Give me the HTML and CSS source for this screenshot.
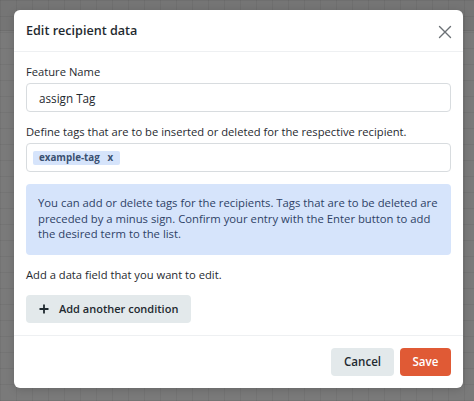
FILE: index.html
```html
<!DOCTYPE html>
<html lang="en">
<head>
  <meta charset="UTF-8">
  <meta name="viewport" content="width=device-width, initial-scale=1.0">
  <title>Edit recipient data</title>
  <link rel="stylesheet" href="styles.css">
</head>
<body>
  <div class="backdrop">
    <div class="page-top"></div>
  </div>

  <div class="modal">
    <div class="modal-header">
      <h2>Edit recipient data</h2>
      <button class="close-btn" aria-label="Close">
        <svg width="14" height="14" viewBox="0 0 14 14">
          <path d="M1.5 1.5 L12.5 12.5 M12.5 1.5 L1.5 12.5" stroke="#6b7075" stroke-width="1.4" stroke-linecap="round"/>
        </svg>
      </button>
    </div>

    <div class="modal-body">
      <label class="field-label">Feature Name</label>
      <div class="text-input">assign Tag</div>

      <label class="field-label">Define tags that are to be inserted or deleted for the respective recipient.</label>
      <div class="tag-input">
        <span class="tag">example-tag <span class="tag-x">x</span></span>
      </div>

      <div class="info-box">
        You can add or delete tags for the recipients. Tags that are to be deleted are<br>
        preceded by a minus sign. Confirm your entry with the Enter button to add<br>
        the desired term to the list.
      </div>

      <p class="field-label hint">Add a data field that you want to edit.</p>

      <button class="add-btn">
        <svg width="10" height="10" viewBox="0 0 10 10">
          <path d="M5 0.5 V9.5 M0.5 5 H9.5" stroke="#1f2a30" stroke-width="1.8"/>
        </svg>
        Add another condition
      </button>
    </div>

    <div class="modal-footer">
      <button class="btn btn-cancel">Cancel</button>
      <button class="btn btn-save">Save</button>
    </div>
  </div>
</body>
</html>
```

FILE: styles.css
```css
body {
    margin: 0;
    padding: 10px 11px 0 14px;
    font-family: "Open Sans", Arial, sans-serif;
    color: #1f2a30;
    background-color: #7a7a7a;
    background-image:
        repeating-linear-gradient(0deg, rgba(0, 0, 0, 0.05) 0 1px, transparent 1px 16px),
        repeating-linear-gradient(90deg, rgba(0, 0, 0, 0.05) 0 1px, transparent 1px 16px);
    height: 401px;
    box-sizing: border-box;
    overflow: hidden;
}

.backdrop {
    position: absolute;
    top: 0;
    left: 0;
    right: 0;
}

.page-top {
    height: 30px;
    background: rgba(0, 0, 0, 0.04);
    border-bottom: 1px solid rgba(0, 0, 0, 0.06);
}

.modal {
    position: relative;
    background: #fff;
    border-radius: 6px;
    width: 449px;
    box-shadow: 0 2px 8px rgba(0, 0, 0, 0.15);
}

.modal-header {
    display: flex;
    align-items: center;
    justify-content: space-between;
    height: 41px;
    padding: 0 10px 0 12px;
    border-bottom: 1px solid #eef0f2;
}

.modal-header h2 {
    margin: 0;
    font-size: 12.6px;
    font-weight: 600;
    color: #1f2a30;
}

.close-btn {
    background: none;
    border: none;
    padding: 0;
    width: 16px;
    height: 16px;
    display: flex;
    align-items: center;
    justify-content: center;
    margin-top: 2px;
}

.modal-body {
    padding: 12px 12px 12px 12px;
    border-bottom: 1px solid #eef0f2;
}

.field-label {
    display: block;
    margin: 0 0 3px 0;
    font-size: 11.2px;
    font-weight: 450;
    line-height: 16px;
    color: #1f2a30;
}

.text-input,
.tag-input {
    height: 27px;
    border: 1px solid #d8dcdf;
    border-radius: 4px;
    margin-bottom: 12px;
    display: flex;
    align-items: center;
}

.text-input {
    padding-left: 12px;
    font-size: 11.7px;
    font-weight: 450;
}

.tag-input {
    padding-left: 6px;
}

.tag {
    background: #d6e4fb;
    color: #3a5070;
    font-size: 9.8px;
    font-weight: 700;
    padding: 0 7px 0 6px;
    height: 14px;
    line-height: 14px;
    border-radius: 2px;
}

.tag-x {
    margin-left: 5px;
}

.info-box {
    background: #d6e4fb;
    border-radius: 4px;
    padding: 11px 6px 13px 12px;
    font-size: 11.3px;
    font-weight: 450;
    line-height: 15.5px;
    color: #2e4266;
    margin-bottom: 12px;
}

.hint {
    margin-bottom: 12px;
}

.add-btn {
    display: flex;
    align-items: center;
    gap: 10px;
    background: #e3e9eb;
    border: none;
    border-radius: 4px;
    height: 28px;
    padding: 0 13px 0 13px;
    font-family: inherit;
    font-size: 11px;
    font-weight: 600;
    color: #1f2a30;
}

.modal-footer {
    display: flex;
    justify-content: flex-end;
    gap: 6px;
    padding: 12px 12px 12px 12px;
}

.btn {
    border: none;
    border-radius: 4px;
    height: 28px;
    font-family: inherit;
    font-size: 11.6px;
    font-weight: 600;
    cursor: pointer;
}

.btn-cancel {
    background: #e3e9eb;
    color: #1f2a30;
    width: 63px;
}

.btn-save {
    background: #e05a35;
    color: #fff;
    width: 51px;
}
```
